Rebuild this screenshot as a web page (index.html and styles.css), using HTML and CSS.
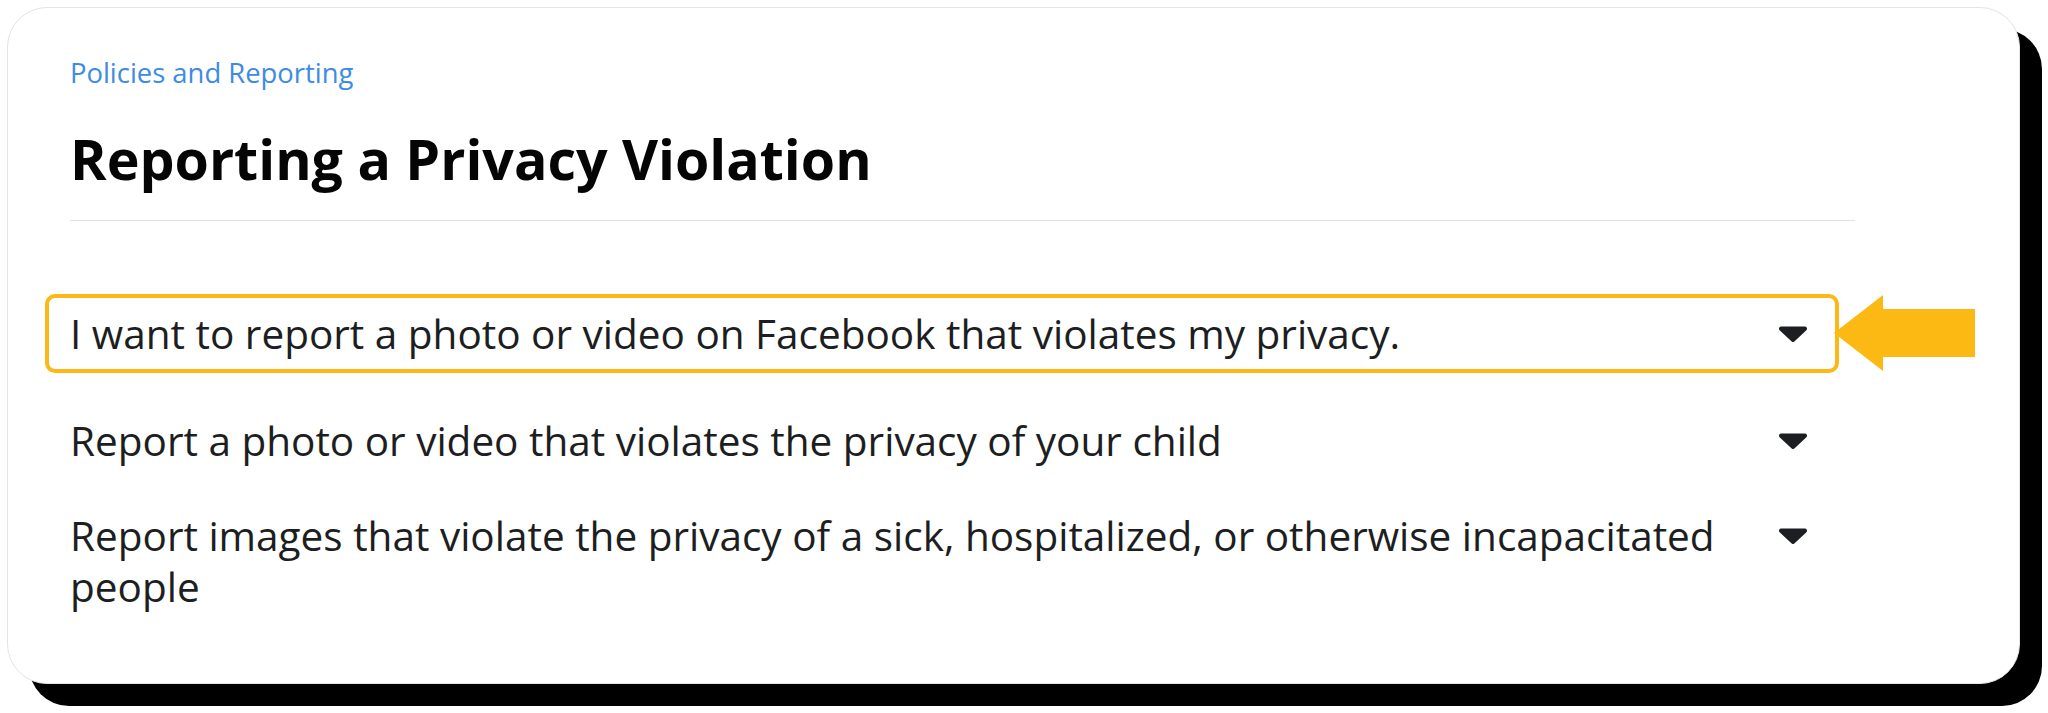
FILE: index.html
```html
<!DOCTYPE html>
<html lang="en">
<head>
<meta charset="utf-8">
<title>Reporting a Privacy Violation</title>
<link rel="stylesheet" href="styles.css">
</head>
<body>
<div class="card">
  <a class="crumb" href="#">Policies and Reporting</a>
  <h1 class="title">Reporting a Privacy Violation</h1>
  <div class="divider"></div>
  <ul class="faq">
    <li class="row row-highlight">
      <span class="row-text">I want to report a photo or video on Facebook that violates my privacy.</span>
      <span class="chev"><svg viewBox="0 0 30 16" width="30" height="16"><path d="M3.2 0.5H26.8a2.2 2.2 0 0 1 1.6 3.7L16.6 15.2a2.2 2.2 0 0 1-3.2 0L1.6 4.2A2.2 2.2 0 0 1 3.2 0.5Z"/></svg></span>
      <svg class="pointer" viewBox="0 0 141 78" width="141" height="78"><polygon points="0,39 49,1 49,15 141,15 141,63 49,63 49,77"/></svg>
    </li>
    <li class="row row-second">
      <span class="row-text">Report a photo or video that violates the privacy of your child</span>
      <span class="chev"><svg viewBox="0 0 30 16" width="30" height="16"><path d="M3.2 0.5H26.8a2.2 2.2 0 0 1 1.6 3.7L16.6 15.2a2.2 2.2 0 0 1-3.2 0L1.6 4.2A2.2 2.2 0 0 1 3.2 0.5Z"/></svg></span>
    </li>
    <li class="row row-third">
      <span class="row-text">Report images that violate the privacy of a sick, hospitalized, or otherwise incapacitated people</span>
      <span class="chev"><svg viewBox="0 0 30 16" width="30" height="16"><path d="M3.2 0.5H26.8a2.2 2.2 0 0 1 1.6 3.7L16.6 15.2a2.2 2.2 0 0 1-3.2 0L1.6 4.2A2.2 2.2 0 0 1 3.2 0.5Z"/></svg></span>
    </li>
  </ul>
</div>
</body>
</html>
```
FILE: styles.css
```css
html, body {
  margin: 0;
  padding: 0;
  background: #ffffff;
}
body {
  font-family: "Open Sans", "Noto Sans", "Liberation Sans", sans-serif;
  color: #1c1e21;
  padding-top: 7px;
  padding-left: 7px;
  height: 713px;
  box-sizing: border-box;
}
.card {
  box-sizing: border-box;
  width: 2013px;
  height: 677px;
  background: #ffffff;
  border: 1px solid #e4e4e4;
  border-radius: 40px;
  box-shadow: 22px 22px 0 #000000;
  padding: 45px 0 0 62px;
  display: flex;
  flex-direction: column;
  align-items: flex-start;
}
.crumb {
  display: block;
  font-size: 27.4px;
  line-height: 40px;
  color: #3d8be4;
  text-decoration: none;
}
.title {
  margin: 34px 0 0 0;
  font-size: 55.5px;
  line-height: 64px;
  font-weight: 700;
  color: #050505;
}
.divider {
  margin-top: 29px;
  width: 1785px;
  height: 1px;
  background: #e0e2e6;
}
.faq {
  list-style: none;
  margin: 73px 0 0 -25px;
  padding: 0;
  display: flex;
  flex-direction: column;
}
.row {
  position: relative;
  box-sizing: border-box;
  width: 1794px;
  display: flex;
  align-items: flex-start;
  justify-content: space-between;
  border: 4px solid transparent;
  border-radius: 10px;
  padding: 10px 27px 10px 21px;
  font-size: 40.5px;
  line-height: 51px;
}
.row-highlight {
  border-color: #fbb817;
}
.row-second {
  margin-top: 28px;
}
.row-third {
  margin-top: 16px;
}
.row-text {
  width: 1660px;
}
.chev {
  height: 51px;
  display: flex;
  align-items: center;
  fill: #1c1e21;
}
.chev svg {
  display: block;
}
.pointer {
  position: absolute;
  left: 100%;
  top: -4px;
  margin-left: -1px;
  fill: #fdb913;
}
```
